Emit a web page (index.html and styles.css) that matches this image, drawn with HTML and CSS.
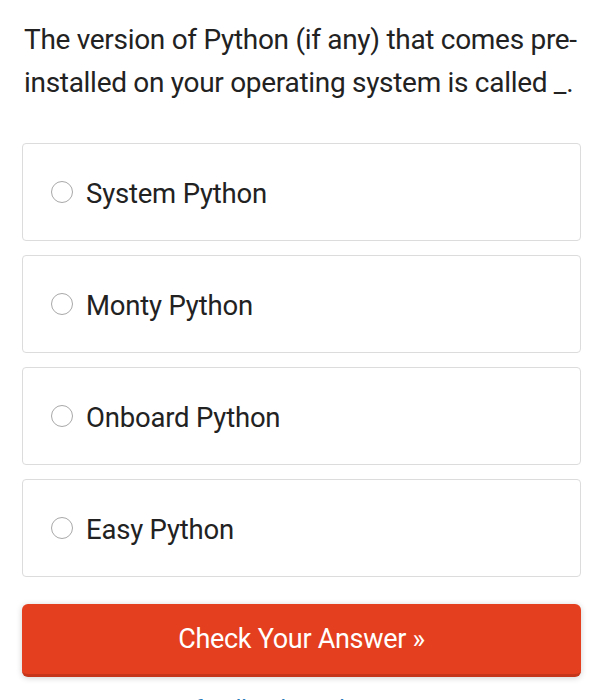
FILE: index.html
```html
<!DOCTYPE html>
<html lang="en">
<head>
  <meta charset="UTF-8">
  <meta name="viewport" content="width=device-width, initial-scale=1.0">
  <title>Quiz</title>
  <link rel="stylesheet" href="styles.css">
</head>
<body>
  <div class="quiz">
    <p class="pergunta">The version of Python (if any) that comes pre-installed on your operating system is called _.</p>

    <div class="opcoes">
      <label class="opcao"><input type="radio" name="resp"><span>System Python</span></label>
      <label class="opcao"><input type="radio" name="resp"><span>Monty Python</span></label>
      <label class="opcao"><input type="radio" name="resp"><span>Onboard Python</span></label>
      <label class="opcao"><input type="radio" name="resp"><span>Easy Python</span></label>
    </div>

    <button class="verificar">Check Your Answer &raquo;</button>

    <div class="feedback">
      <svg width="20" height="20" viewBox="0 0 20 20"><circle cx="10" cy="10" r="9" fill="#2a7ab8"/></svg>
      <span>Got feedback on this question?</span>
    </div>
  </div>
</body>
</html>
```

FILE: styles.css
```css
body { margin: 0; background: #fff; font-family: Roboto, "Noto Sans", sans-serif; color: #222; }
.quiz { padding: 18px 23px 0 22px; }
.pergunta { font-size: 28px; line-height: 43px; margin: 0 0 39px 2px; letter-spacing: -0.3px; }
.opcoes { display: flex; flex-direction: column; gap: 14px; }
.opcao {
  display: flex; align-items: center; height: 96px; padding: 0 0 0 28px;
  border: 1px solid #dcdcdc; border-radius: 4px; font-size: 27.5px; letter-spacing: -0.2px;
}
.opcao input {
  appearance: none; width: 22px; height: 22px; margin: 0 13px 0 0;
  border: 1.5px solid #a8a8a8; border-radius: 50%; background: #fff;
}
.opcao span { padding-top: 2px; }
.verificar {
  display: block; width: 100%; height: 73px; margin-top: 27px;
  background: #e43f1e; color: #fff; border: none; border-bottom: 3px solid #c4351a;
  border-radius: 6px; box-shadow: 0 1px 6px rgba(0,0,0,0.18);
  font-family: Roboto, sans-serif; font-size: 27px; letter-spacing: -0.3px; cursor: pointer;
}
.feedback {
  display: flex; align-items: center; justify-content: center; gap: 8px;
  margin-top: 18px; color: #2a7ab8; font-size: 24px;
}
```
